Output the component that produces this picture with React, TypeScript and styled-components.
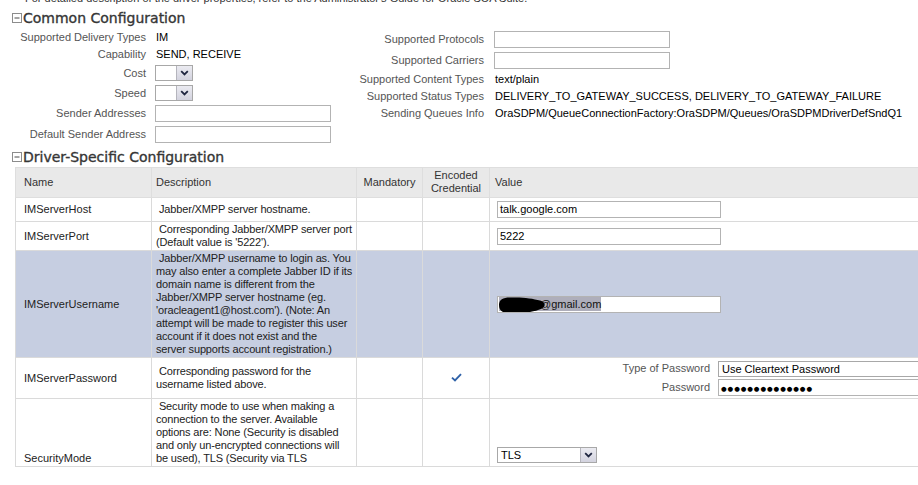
import styled, { createGlobalStyle } from 'styled-components';

const GlobalStyle = createGlobalStyle`
  html, body {
    margin: 0;
    padding: 0;
    background: #fff;
  }
  body {
    font-family: "Liberation Sans", Arial, sans-serif;
    font-size: 11px;
    color: #000;
  }
`;

const CollapseIcon = () =>
  <svg width="10" height="10" viewBox="0 0 10 10">
    <rect x="0.5" y="0.5" width="9" height="9" fill="#fff" stroke="#8c8c8c" />
    <line x1="2.5" y1="5" x2="7.5" y2="5" stroke="#4a4a4a" strokeWidth="1" />
  </svg>;

const Chevron = () =>
  <svg width="9" height="6" viewBox="0 0 9 6">
    <path d="M1.2 1.2 L4.5 4.4 L7.8 1.2" fill="none" stroke="#1f2640" strokeWidth="1.8" />
  </svg>;

const Check = () =>
  <svg width="11" height="9" viewBox="0 0 11 9">
    <path d="M1 4.6 L4 7.4 L10 1.2" fill="none" stroke="#2f62a8" strokeWidth="1.9" />
  </svg>;

interface SelectProps {
  width: number
  value?: string
}

const Select: React.FC<SelectProps> = ({ width, value }) =>
  <SelectBox $width={width}>
    <SelectText>{value}</SelectText>
    <SelectArrow><Chevron /></SelectArrow>
  </SelectBox>;

const App = () =>
  <Page>
    <GlobalStyle />
    <TopNote>
      For detailed description of the driver properties, refer to the Administrator's Guide for Oracle SOA Suite.
    </TopNote>

    <SectionTitle $gap={5}><CollapseIcon />Common Configuration</SectionTitle>
    <CommonConfig>
      <FieldGrid $label={146} $gap={9} $width={340}>
        <Label>Supported Delivery Types</Label>
        <Value>IM</Value>
        <Label>Capability</Label>
        <Value>SEND, RECEIVE</Value>
        <Label>Cost</Label>
        <div><Select width={38} /></div>
        <Label>Speed</Label>
        <div><Select width={38} /></div>
        <Label>Sender Addresses</Label>
        <div><TextField $width={176} /></div>
        <Label>Default Sender Address</Label>
        <div><TextField $width={176} /></div>
      </FieldGrid>
      <FieldGrid $label={144} $gap={10} $width={578}>
        <Label>Supported Protocols</Label>
        <div><TextField $width={176} /></div>
        <Label>Supported Carriers</Label>
        <div><TextField $width={176} /></div>
        <Label>Supported Content Types</Label>
        <Value>text/plain</Value>
        <Label>Supported Status Types</Label>
        <Value>DELIVERY_TO_GATEWAY_SUCCESS, DELIVERY_TO_GATEWAY_FAILURE</Value>
        <Label>Sending Queues Info</Label>
        <Value>OraSDPM/QueueConnectionFactory:OraSDPM/Queues/OraSDPMDriverDefSndQ1</Value>
      </FieldGrid>
    </CommonConfig>

    <SectionTitle $gap={4}><CollapseIcon />Driver-Specific Configuration</SectionTitle>
    <ConfigTable>
      <colgroup>
        <col style={{ width: 136 }} />
        <col style={{ width: 205 }} />
        <col style={{ width: 66 }} />
        <col style={{ width: 67 }} />
        <col />
      </colgroup>
      <thead>
        <tr>
          <HeadCell $pad={8}>Name</HeadCell>
          <HeadCell $pad={4}>Description</HeadCell>
          <HeadCell $align="center">Mandatory</HeadCell>
          <HeadCell $align="center">Encoded<br />Credential</HeadCell>
          <HeadCell $pad={5}>Value</HeadCell>
        </tr>
      </thead>
      <tbody>
        <Row>
          <NameCell>IMServerHost</NameCell>
          <DescCell>{'\u00a0'}Jabber/XMPP server hostname.</DescCell>
          <Cell />
          <Cell />
          <ValueCell><TextField $width={224}>talk.google.com</TextField></ValueCell>
        </Row>
        <Row>
          <NameCell>IMServerPort</NameCell>
          <DescCell>
            {'\u00a0'}Corresponding Jabber/XMPP server port<br />
            (Default value is '5222').
          </DescCell>
          <Cell />
          <Cell />
          <ValueCell><TextField $width={224}>5222</TextField></ValueCell>
        </Row>
        <Row $selected>
          <NameCell>IMServerUsername</NameCell>
          <DescCell>
            {'\u00a0'}Jabber/XMPP username to login as. You<br />
            may also enter a complete Jabber ID if its<br />
            domain name is different from the<br />
            Jabber/XMPP server hostname (eg.<br />
            'oracleagent1@host.com'). (Note: An<br />
            attempt will be made to register this user<br />
            account if it does not exist and the<br />
            server supports account registration.)
          </DescCell>
          <Cell />
          <Cell />
          <ValueCell>
            <TextField $width={224}>
              <Selection>@gmail.com</Selection>
              <Redaction width="50" height="19" viewBox="0 0 50 19">
                <path d="M1 9 C1 3 6 1 14 1.5 C24 1 35 2.5 42 4.5 C48 6 48 11 43 13 C36 16 22 18 11 17.5 C4 17 1 14 1 9 Z" fill="#000" />
              </Redaction>
            </TextField>
          </ValueCell>
        </Row>
        <Row>
          <NameCell>IMServerPassword</NameCell>
          <DescCell>
            {'\u00a0'}Corresponding password for the<br />
            username listed above.
          </DescCell>
          <Cell />
          <Cell $align="center"><Check /></Cell>
          <ValueCell>
            <SubForm>
              <SubLabel>Type of Password</SubLabel>
              <SelectBox $width={224}><SelectText>Use Cleartext Password</SelectText></SelectBox>
              <SubLabel>Password</SubLabel>
              <TextField $width={224}><Dots>●●●●●●●●●●●●●●</Dots></TextField>
            </SubForm>
          </ValueCell>
        </Row>
        <Row $valign="bottom">
          <NameCell>SecurityMode</NameCell>
          <DescCell>
            {'\u00a0'}Security mode to use when making a<br />
            connection to the server. Available<br />
            options are: None (Security is disabled<br />
            and only un-encrypted connections will<br />
            be used), TLS (Security via TLS
          </DescCell>
          <Cell />
          <Cell />
          <ValueCell><Select width={100} value="TLS" /></ValueCell>
        </Row>
      </tbody>
    </ConfigTable>
  </Page>;


const Page = styled.div`
  width: 918px;
  height: 485px;
  overflow: hidden;
`;

const TopNote = styled.p`
  margin: -8px 0 0 25px;
  line-height: 13px;
  color: #333;
  white-space: nowrap;
`;

const SectionTitle = styled.h2<{ $gap: number }>`
  display: flex;
  align-items: center;
  gap: 1px;
  height: 16px;
  margin: ${p => p.$gap}px 0 0;
  padding-left: 12px;
  font-family: "DejaVu Sans", Verdana, sans-serif;
  font-size: 14px;
  font-weight: normal;
  color: #363636;
  -webkit-text-stroke: 0.35px #363636;
  white-space: nowrap;
`;

const CommonConfig = styled.div`
  display: flex;
  align-items: flex-start;
  margin-top: 3px;
`;

const FieldGrid = styled.div<{ $label: number; $gap: number; $width: number }>`
  display: grid;
  grid-template-columns: ${p => p.$label}px 1fr;
  column-gap: ${p => p.$gap}px;
  align-items: center;
  align-content: start;
  width: ${p => p.$width}px;
  flex-shrink: 0;
`;

const Label = styled.div`
  justify-self: end;
  line-height: 17px;
  color: #555;
  white-space: nowrap;
`;

const Value = styled.div`
  padding-left: 1px;
  line-height: 17px;
  color: #000;
  white-space: nowrap;
`;

const TextField = styled.div<{ $width: number }>`
  position: relative;
  box-sizing: border-box;
  width: ${p => p.$width}px;
  height: 17px;
  margin: 2px 0;
  padding: 0 2px;
  border: 1px solid #b3b3b3;
  background: #fff;
  line-height: 15px;
  color: #000;
  white-space: nowrap;
  overflow: hidden;
`;

const SelectBox = styled.div<{ $width: number }>`
  display: flex;
  box-sizing: border-box;
  width: ${p => p.$width}px;
  height: 16px;
  margin: 2px 0;
  border: 1px solid #a8a8a8;
  background: #fff;
`;

const SelectText = styled.span`
  flex: 1;
  padding-left: 3px;
  line-height: 14px;
  color: #000;
  white-space: nowrap;
  overflow: hidden;
`;

const SelectArrow = styled.span`
  display: flex;
  align-items: center;
  justify-content: center;
  width: 15px;
  border-left: 1px solid #b5b5bd;
  background: linear-gradient(#ebebf1, #d3d3df);
`;

const Selection = styled.span`
  display: inline-block;
  margin-left: -1px;
  padding-left: 41px;
  background: #aeaebb;
  line-height: 14px;
  color: #111;
`;

const Redaction = styled.svg`
  position: absolute;
  left: 0;
  top: -1px;
`;

const Dots = styled.span`
  font-family: "DejaVu Sans", sans-serif;
  font-size: 6.5px;
  letter-spacing: 0.9px;
  line-height: 15px;
`;

const ConfigTable = styled.table`
  width: 945px;
  margin: 2px 0 0 15px;
  border-collapse: collapse;
  table-layout: fixed;
  line-height: 13px;
`;

const HeadCell = styled.th<{ $align?: string; $pad?: number }>`
  padding: 1px ${p => p.$pad ?? 2}px 2px;
  border: 1px solid #dedede;
  background: #e9e9e9;
  text-align: ${p => p.$align ?? 'left'};
  font-weight: normal;
  color: #333;
  white-space: nowrap;
`;

const Row = styled.tr<{ $selected?: boolean; $valign?: string }>`
  background: ${p => p.$selected ? '#c6cee1' : '#fff'};
  vertical-align: ${p => p.$valign ?? 'middle'};
`;

const Cell = styled.td<{ $align?: string }>`
  padding: 1px 4px 1px;
  border: 1px solid #dadada;
  text-align: ${p => p.$align ?? 'left'};
  color: #222;
`;

const NameCell = styled(Cell)`
  padding-left: 8px;
  white-space: nowrap;
`;

const DescCell = styled(Cell)`
  vertical-align: middle;
  letter-spacing: -0.15px;
  white-space: nowrap;
  overflow: visible;
`;

const ValueCell = styled(Cell)`
  padding-left: 7px;
  padding-right: 17px;
`;

const SubForm = styled.div`
  display: grid;
  grid-template-columns: 1fr 224px;
  grid-auto-rows: 19px;
  column-gap: 8px;
  align-items: center;
`;

const SubLabel = styled.div`
  justify-self: end;
  color: #555;
  white-space: nowrap;
`;

export default App;
